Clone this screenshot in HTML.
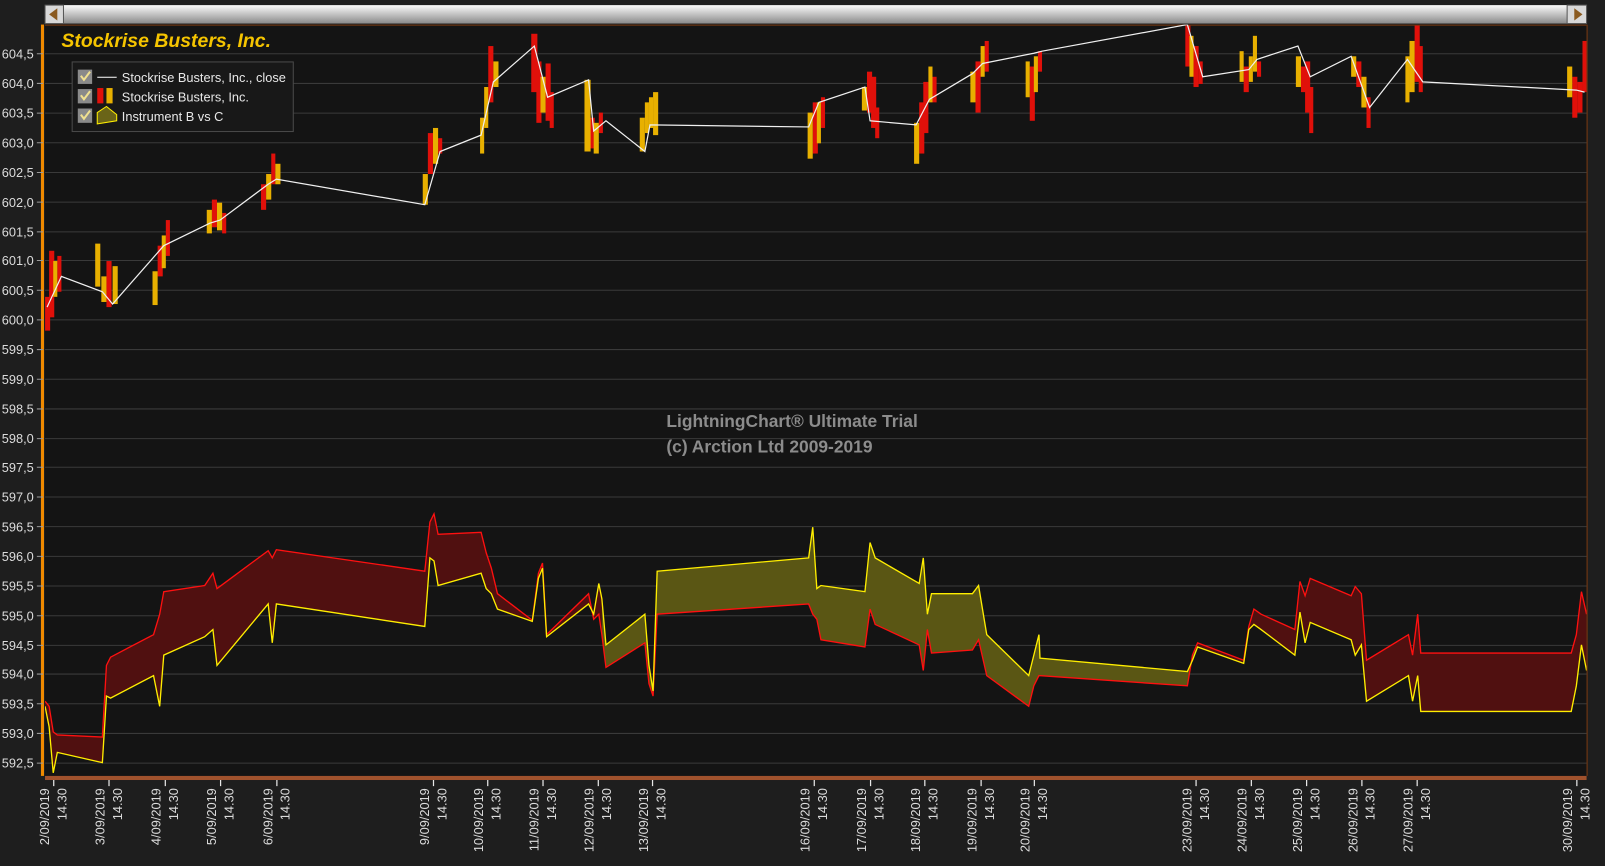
<!DOCTYPE html>
<html><head><meta charset="utf-8"><style>
html,body{margin:0;padding:0;background:#1e1e1e;width:1605px;height:866px;overflow:hidden;font-family:"Liberation Sans",sans-serif}
svg{position:absolute;left:0;top:0}
</style></head><body>
<svg width="1605" height="866" viewBox="0 0 1568 846" preserveAspectRatio="none">
<defs>
<linearGradient id="sb" x1="0" y1="0" x2="0" y2="1"><stop offset="0" stop-color="#fafafa"/><stop offset="1" stop-color="#8a8a8a"/></linearGradient>
<clipPath id="cr"><rect x="0" y="0" width="588" height="866"/><rect x="1168" y="0" width="500" height="866"/></clipPath>
<clipPath id="co"><rect x="588" y="0" width="580" height="866"/></clipPath>
<clipPath id="plot"><rect x="44" y="24" width="1506" height="734"/></clipPath>
</defs>
<rect x="0" y="0" width="1568" height="846" fill="#1e1e1e"/>
<!-- scrollbar -->
<rect x="44" y="5" width="1506" height="18" fill="url(#sb)"/>
<rect x="44" y="5" width="18" height="18" fill="#d8d8d8" stroke="#555"/>
<polygon points="56,8 48,14 56,20" fill="#8a5a20"/>
<rect x="1531" y="5" width="19" height="18" fill="#d8d8d8" stroke="#555"/>
<polygon points="1538,8 1546,14 1538,20" fill="#8a5a20"/>
<!-- plot bg -->
<rect x="44" y="24" width="1506" height="734" fill="#141414"/>
<line x1="44" y1="24.5" x2="1550" y2="24.5" stroke="#7a3a10"/>
<line x1="1550.5" y1="24" x2="1550.5" y2="758" stroke="#7a3a10"/>
<g stroke="#3a3a3a" stroke-width="1">
<line x1="44" x2="1550" y1="52.5" y2="52.5"/><line x1="44" x2="1550" y1="81.5" y2="81.5"/><line x1="44" x2="1550" y1="110.5" y2="110.5"/><line x1="44" x2="1550" y1="139.5" y2="139.5"/><line x1="44" x2="1550" y1="168.5" y2="168.5"/><line x1="44" x2="1550" y1="197.5" y2="197.5"/><line x1="44" x2="1550" y1="226.5" y2="226.5"/><line x1="44" x2="1550" y1="254.5" y2="254.5"/><line x1="44" x2="1550" y1="283.5" y2="283.5"/><line x1="44" x2="1550" y1="312.5" y2="312.5"/><line x1="44" x2="1550" y1="341.5" y2="341.5"/><line x1="44" x2="1550" y1="370.5" y2="370.5"/><line x1="44" x2="1550" y1="399.5" y2="399.5"/><line x1="44" x2="1550" y1="428.5" y2="428.5"/><line x1="44" x2="1550" y1="456.5" y2="456.5"/><line x1="44" x2="1550" y1="485.5" y2="485.5"/><line x1="44" x2="1550" y1="514.5" y2="514.5"/><line x1="44" x2="1550" y1="543.5" y2="543.5"/><line x1="44" x2="1550" y1="572.5" y2="572.5"/><line x1="44" x2="1550" y1="601.5" y2="601.5"/><line x1="44" x2="1550" y1="630.5" y2="630.5"/><line x1="44" x2="1550" y1="658.5" y2="658.5"/><line x1="44" x2="1550" y1="687.5" y2="687.5"/><line x1="44" x2="1550" y1="716.5" y2="716.5"/><line x1="44" x2="1550" y1="745.5" y2="745.5"/>
</g>
<g clip-path="url(#plot)">
<polygon clip-path="url(#cr)" fill="#501010" points="44,685 48,690 52,715 56,718 100,720 104,650 108,642 150,620 156,600 160,578 200,572 208,560 212,575 262,538 266,545 270,537 415,558 420,510 424,502 428,522 470,520 475,540 480,555 486,580 520,606 526,560 530,550 534,620 575,580 580,605 585,600 588,620 592,652 630,628 634,668 638,680 642,600 790,590 794,600 798,605 802,625 845,632 850,595 855,610 898,630 902,655 906,615 910,638 950,635 956,625 964,660 1005,690 1010,670 1015,660 1160,670 1165,640 1170,628 1215,645 1220,612 1225,595 1232,600 1265,615 1270,568 1275,582 1280,565 1320,582 1324,573 1330,580 1335,645 1376,620 1380,640 1385,600 1388,638 1535,638 1540,620 1545,578 1550,600 1550,655 1545,630 1540,670 1535,695 1388,695 1385,660 1380,685 1376,660 1335,685 1330,630 1324,640 1320,625 1280,608 1275,628 1270,598 1265,640 1232,615 1225,610 1220,615 1215,648 1170,632 1165,645 1160,656 1016,643 1015,620 1010,640 1005,660 964,620 956,572 950,580 910,580 906,600 902,545 898,570 855,545 850,530 845,578 802,572 798,575 794,515 790,545 642,558 638,675 634,650 630,600 592,630 588,585 585,570 580,600 575,590 534,622 530,555 526,565 520,607 486,595 480,580 475,575 470,560 428,572 424,548 420,545 415,612 270,590 266,628 262,590 212,650 208,615 200,622 160,640 156,690 150,660 108,682 104,680 100,745 56,735 52,755 48,710 44,690"/>
<polygon clip-path="url(#co)" fill="#5a5614" points="44,685 48,690 52,715 56,718 100,720 104,650 108,642 150,620 156,600 160,578 200,572 208,560 212,575 262,538 266,545 270,537 415,558 420,510 424,502 428,522 470,520 475,540 480,555 486,580 520,606 526,560 530,550 534,620 575,580 580,605 585,600 588,620 592,652 630,628 634,668 638,680 642,600 790,590 794,600 798,605 802,625 845,632 850,595 855,610 898,630 902,655 906,615 910,638 950,635 956,625 964,660 1005,690 1010,670 1015,660 1160,670 1165,640 1170,628 1215,645 1220,612 1225,595 1232,600 1265,615 1270,568 1275,582 1280,565 1320,582 1324,573 1330,580 1335,645 1376,620 1380,640 1385,600 1388,638 1535,638 1540,620 1545,578 1550,600 1550,655 1545,630 1540,670 1535,695 1388,695 1385,660 1380,685 1376,660 1335,685 1330,630 1324,640 1320,625 1280,608 1275,628 1270,598 1265,640 1232,615 1225,610 1220,615 1215,648 1170,632 1165,645 1160,656 1016,643 1015,620 1010,640 1005,660 964,620 956,572 950,580 910,580 906,600 902,545 898,570 855,545 850,530 845,578 802,572 798,575 794,515 790,545 642,558 638,675 634,650 630,600 592,630 588,585 585,570 580,600 575,590 534,622 530,555 526,565 520,607 486,595 480,580 475,575 470,560 428,572 424,548 420,545 415,612 270,590 266,628 262,590 212,650 208,615 200,622 160,640 156,690 150,660 108,682 104,680 100,745 56,735 52,755 48,710 44,690"/>
<polyline fill="none" stroke="#ff1010" stroke-width="1.3" points="44,685 48,690 52,715 56,718 100,720 104,650 108,642 150,620 156,600 160,578 200,572 208,560 212,575 262,538 266,545 270,537 415,558 420,510 424,502 428,522 470,520 475,540 480,555 486,580 520,606 526,560 530,550 534,620 575,580 580,605 585,600 588,620 592,652 630,628 634,668 638,680 642,600 790,590 794,600 798,605 802,625 845,632 850,595 855,610 898,630 902,655 906,615 910,638 950,635 956,625 964,660 1005,690 1010,670 1015,660 1160,670 1165,640 1170,628 1215,645 1220,612 1225,595 1232,600 1265,615 1270,568 1275,582 1280,565 1320,582 1324,573 1330,580 1335,645 1376,620 1380,640 1385,600 1388,638 1535,638 1540,620 1545,578 1550,600"/>
<polyline fill="none" stroke="#ffee00" stroke-width="1.3" points="44,690 48,710 52,755 56,735 100,745 104,680 108,682 150,660 156,690 160,640 200,622 208,615 212,650 262,590 266,628 270,590 415,612 420,545 424,548 428,572 470,560 475,575 480,580 486,595 520,607 526,565 530,555 534,622 575,590 580,600 585,570 588,585 592,630 630,600 634,650 638,675 642,558 790,545 794,515 798,575 802,572 845,578 850,530 855,545 898,570 902,545 906,600 910,580 950,580 956,572 964,620 1005,660 1010,640 1015,620 1016,643 1160,656 1165,645 1170,632 1215,648 1220,615 1225,610 1232,615 1265,640 1270,598 1275,628 1280,608 1320,625 1324,640 1330,630 1335,685 1376,660 1380,685 1385,660 1388,695 1535,695 1540,670 1545,630 1550,655"/>
<g fill="#e0100a">
<rect x="44" y="290" width="5" height="33"/><rect x="48" y="245" width="5" height="65"/><rect x="56" y="250" width="4" height="35"/>
<rect x="104" y="255" width="5" height="45"/><rect x="154" y="240" width="5" height="30"/><rect x="162" y="215" width="4" height="35"/>
<rect x="207" y="195" width="5" height="27"/><rect x="217" y="208" width="4" height="20"/><rect x="255" y="180" width="5" height="25"/><rect x="265" y="150" width="4" height="30"/>
<rect x="418" y="130" width="5" height="40"/><rect x="428" y="135" width="4" height="15"/><rect x="477" y="45" width="5" height="55"/>
<rect x="519" y="33" width="6" height="57"/><rect x="524" y="60" width="5" height="60"/><rect x="533" y="62" width="5" height="56"/><rect x="537" y="90" width="4" height="35"/>
<rect x="576" y="115" width="5" height="30"/><rect x="585" y="110" width="4" height="20"/><rect x="794" y="100" width="5" height="50"/><rect x="802" y="95" width="4" height="30"/>
<rect x="847" y="70" width="5" height="40"/><rect x="851" y="75" width="5" height="50"/><rect x="855" y="105" width="4" height="30"/>
<rect x="898" y="100" width="5" height="50"/><rect x="902" y="80" width="5" height="50"/><rect x="911" y="75" width="4" height="25"/>
<rect x="953" y="60" width="5" height="50"/><rect x="962" y="40" width="4" height="30"/><rect x="1006" y="65" width="5" height="53"/><rect x="1014" y="50" width="4" height="20"/>
<rect x="1158" y="25" width="5" height="40"/><rect x="1166" y="45" width="5" height="40"/><rect x="1171" y="60" width="4" height="22"/>
<rect x="1215" y="65" width="5" height="25"/><rect x="1228" y="60" width="4" height="15"/><rect x="1271" y="65" width="5" height="25"/><rect x="1275" y="60" width="5" height="50"/><rect x="1279" y="85" width="4" height="45"/>
<rect x="1325" y="60" width="5" height="25"/><rect x="1335" y="95" width="4" height="30"/><rect x="1382" y="25" width="5" height="55"/><rect x="1386" y="45" width="4" height="45"/>
<rect x="1536" y="75" width="5" height="40"/><rect x="1541" y="80" width="5" height="30"/><rect x="1546" y="40" width="4" height="50"/>
</g>
<g fill="#e8b000">
<rect x="52" y="255" width="4" height="35"/><rect x="93" y="238" width="5" height="42"/><rect x="99" y="270" width="5" height="25"/><rect x="110" y="260" width="5" height="37"/>
<rect x="149" y="265" width="5" height="33"/><rect x="158" y="230" width="4" height="32"/><rect x="202" y="205" width="5" height="23"/><rect x="212" y="198" width="5" height="27"/>
<rect x="260" y="170" width="5" height="25"/><rect x="269" y="160" width="5" height="20"/><rect x="413" y="170" width="5" height="30"/><rect x="423" y="125" width="5" height="35"/>
<rect x="469" y="115" width="4" height="35"/><rect x="473" y="85" width="4" height="40"/><rect x="482" y="60" width="5" height="25"/><rect x="528" y="75" width="5" height="35"/>
<rect x="571" y="78" width="6" height="70"/><rect x="580" y="120" width="5" height="30"/><rect x="625" y="115" width="5" height="33"/><rect x="630" y="100" width="4" height="30"/><rect x="634" y="95" width="4" height="30"/><rect x="638" y="90" width="5" height="42"/>
<rect x="789" y="110" width="5" height="45"/><rect x="798" y="100" width="4" height="40"/><rect x="842" y="85" width="5" height="23"/><rect x="893" y="120" width="5" height="40"/><rect x="907" y="65" width="4" height="35"/>
<rect x="948" y="70" width="5" height="30"/><rect x="958" y="45" width="4" height="30"/><rect x="1002" y="60" width="4" height="35"/><rect x="1010" y="55" width="4" height="35"/>
<rect x="1162" y="35" width="4" height="40"/><rect x="1211" y="50" width="4" height="30"/><rect x="1220" y="55" width="4" height="25"/><rect x="1224" y="35" width="4" height="35"/>
<rect x="1266" y="55" width="5" height="30"/><rect x="1320" y="55" width="5" height="20"/><rect x="1330" y="75" width="5" height="30"/><rect x="1373" y="55" width="4" height="45"/><rect x="1377" y="40" width="5" height="50"/>
<rect x="1531" y="65" width="5" height="30"/>
</g>
<polyline fill="none" stroke="#f0f0f0" stroke-width="1.2" points="46,300 60,270 100,285 110,297 160,240 205,218 215,215 262,180 270,175 415,200 430,148 470,132 482,80 522,45 535,95 575,78 580,128 592,118 630,148 635,122 790,124 800,100 845,85 850,118 895,122 908,97 950,72 960,62 1010,52 1018,50 1160,24 1175,75 1220,68 1228,58 1268,45 1280,75 1320,55 1338,105 1375,58 1390,80 1540,88 1548,90"/>
</g>
<rect x="40" y="24" width="3" height="734" fill="#f08a00"/>
<g stroke="#9a9a9a"><path d="M36 52.5h6M36 81.5h6M36 110.5h6M36 139.5h6M36 168.5h6M36 197.5h6M36 226.5h6M36 254.5h6M36 283.5h6M36 312.5h6M36 341.5h6M36 370.5h6M36 399.5h6M36 428.5h6M36 456.5h6M36 485.5h6M36 514.5h6M36 543.5h6M36 572.5h6M36 601.5h6M36 630.5h6M36 658.5h6M36 687.5h6M36 716.5h6M36 745.5h6"/></g>
<rect x="44" y="758" width="1506" height="4" fill="#a0522d"/>
<g stroke="#e8e8e8" stroke-width="1.2"><path d="M52.5 762v6M106.5 762v6M161.5 762v6M215.5 762v6M270.5 762v6M423.5 762v6M476.5 762v6M530.5 762v6M584.5 762v6M637.5 762v6M795.5 762v6M850.5 762v6M903.5 762v6M958.5 762v6M1010.5 762v6M1168.5 762v6M1222.5 762v6M1276.5 762v6M1330.5 762v6M1384.5 762v6M1540.5 762v6"/></g>
<g font-size="12.5" fill="#dcdcdc" text-anchor="end" font-family="Liberation Sans,sans-serif">
<text x="33" y="57">604,5</text><text x="33" y="86">604,0</text><text x="33" y="115">603,5</text><text x="33" y="144">603,0</text><text x="33" y="173">602,5</text><text x="33" y="202">602,0</text><text x="33" y="231">601,5</text><text x="33" y="259">601,0</text><text x="33" y="288">600,5</text><text x="33" y="317">600,0</text><text x="33" y="346">599,5</text><text x="33" y="375">599,0</text><text x="33" y="404">598,5</text><text x="33" y="433">598,0</text><text x="33" y="461">597,5</text><text x="33" y="490">597,0</text><text x="33" y="519">596,5</text><text x="33" y="548">596,0</text><text x="33" y="577">595,5</text><text x="33" y="606">595,0</text><text x="33" y="635">594,5</text><text x="33" y="663">594,0</text><text x="33" y="692">593,5</text><text x="33" y="721">593,0</text><text x="33" y="750">592,5</text>
</g>
<g font-size="12.5" fill="#dcdcdc" text-anchor="end" font-family="Liberation Sans,sans-serif">
<text transform="translate(48,770) rotate(-90)">2/09/2019</text><text transform="translate(65,770) rotate(-90)">14.30</text>
<text transform="translate(102,770) rotate(-90)">3/09/2019</text><text transform="translate(119,770) rotate(-90)">14.30</text>
<text transform="translate(157,770) rotate(-90)">4/09/2019</text><text transform="translate(174,770) rotate(-90)">14.30</text>
<text transform="translate(211,770) rotate(-90)">5/09/2019</text><text transform="translate(228,770) rotate(-90)">14.30</text>
<text transform="translate(266,770) rotate(-90)">6/09/2019</text><text transform="translate(283,770) rotate(-90)">14.30</text>
<text transform="translate(419,770) rotate(-90)">9/09/2019</text><text transform="translate(436,770) rotate(-90)">14.30</text>
<text transform="translate(472,770) rotate(-90)">10/09/2019</text><text transform="translate(489,770) rotate(-90)">14.30</text>
<text transform="translate(526,770) rotate(-90)">11/09/2019</text><text transform="translate(543,770) rotate(-90)">14.30</text>
<text transform="translate(580,770) rotate(-90)">12/09/2019</text><text transform="translate(597,770) rotate(-90)">14.30</text>
<text transform="translate(633,770) rotate(-90)">13/09/2019</text><text transform="translate(650,770) rotate(-90)">14.30</text>
<text transform="translate(791,770) rotate(-90)">16/09/2019</text><text transform="translate(808,770) rotate(-90)">14.30</text>
<text transform="translate(846,770) rotate(-90)">17/09/2019</text><text transform="translate(863,770) rotate(-90)">14.30</text>
<text transform="translate(899,770) rotate(-90)">18/09/2019</text><text transform="translate(916,770) rotate(-90)">14.30</text>
<text transform="translate(954,770) rotate(-90)">19/09/2019</text><text transform="translate(971,770) rotate(-90)">14.30</text>
<text transform="translate(1006,770) rotate(-90)">20/09/2019</text><text transform="translate(1023,770) rotate(-90)">14.30</text>
<text transform="translate(1164,770) rotate(-90)">23/09/2019</text><text transform="translate(1181,770) rotate(-90)">14.30</text>
<text transform="translate(1218,770) rotate(-90)">24/09/2019</text><text transform="translate(1235,770) rotate(-90)">14.30</text>
<text transform="translate(1272,770) rotate(-90)">25/09/2019</text><text transform="translate(1289,770) rotate(-90)">14.30</text>
<text transform="translate(1326,770) rotate(-90)">26/09/2019</text><text transform="translate(1343,770) rotate(-90)">14.30</text>
<text transform="translate(1380,770) rotate(-90)">27/09/2019</text><text transform="translate(1397,770) rotate(-90)">14.30</text>
<text transform="translate(1536,770) rotate(-90)">30/09/2019</text><text transform="translate(1553,770) rotate(-90)">14.30</text>
</g>
<text x="60" y="46" font-size="19" font-weight="bold" font-style="italic" fill="#f5c400" font-family="Liberation Sans,sans-serif">Stockrise Busters, Inc.</text>
<rect x="70.5" y="60.5" width="216" height="68" fill="#181818" stroke="#4a4a4a"/>
<g font-size="12.5" fill="#e8e8e8" font-family="Liberation Sans,sans-serif">
<rect x="76" y="68" width="14" height="14" fill="#8a8a8a"/><path d="M79 74l3 4 6-8" stroke="#f0e090" stroke-width="2" fill="none"/>
<line x1="95" y1="75.5" x2="114" y2="75.5" stroke="#fff"/>
<text x="119" y="80">Stockrise Busters, Inc., close</text>
<rect x="76" y="87" width="14" height="14" fill="#8a8a8a"/><path d="M79 93l3 4 6-8" stroke="#f0e090" stroke-width="2" fill="none"/>
<rect x="95" y="86" width="6" height="15" fill="#e0100a"/><rect x="104" y="86" width="6" height="15" fill="#e8b000"/>
<text x="119" y="99">Stockrise Busters, Inc.</text>
<rect x="76" y="106" width="14" height="14" fill="#8a8a8a"/><path d="M79 112l3 4 6-8" stroke="#f0e090" stroke-width="2" fill="none"/>
<polygon points="95,110 104,104 114,112 114,118 95,121" fill="#6a6418" stroke="#ffee00"/>
<text x="119" y="118">Instrument B vs C</text>
</g>
<g font-size="17" font-weight="bold" fill="#8c8c8c" font-family="Liberation Sans,sans-serif">
<text x="651" y="417">LightningChart® Ultimate Trial</text>
<text x="651" y="442">(c) Arction Ltd 2009-2019</text>
</g>
</svg>
</body></html>
